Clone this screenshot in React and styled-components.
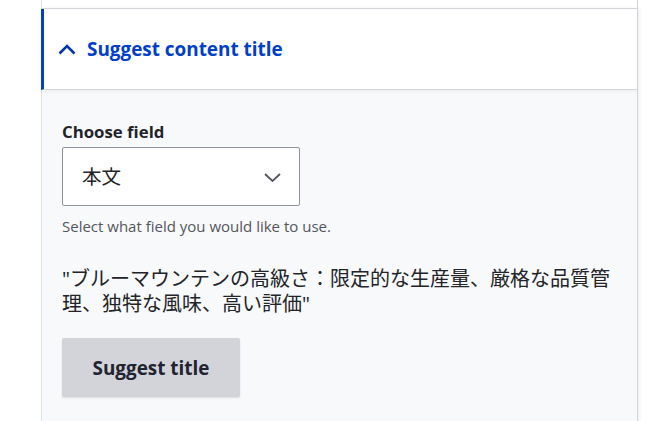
import React, { useState } from "react";
import styled, { createGlobalStyle } from "styled-components";

const GlobalStyle = createGlobalStyle`
  html, body {
    margin: 0;
    padding: 0;
    background: #ffffff;
  }
  body {
    font-family: "Open Sans", "Noto Sans CJK JP", sans-serif;
    font-variant-ligatures: no-common-ligatures;
    color: #232429;
  }
`;

const Page = styled.div`
  padding-left: 41px;
  width: 597px;
`;

const PrevItem = styled.div`
  height: 8px;
  background: #ffffff;
  border-left: 1px solid #dedfe4;
  border-right: 1px solid #d3d4d9;
`;

const Details = styled.div`
  border: 1px solid #d3d4d9;
  border-left-color: #dedfe4;
  border-bottom: none;
  background: #f8f9fb;
  box-shadow: 2px 0 3px rgba(0, 0, 0, 0.05);
  min-height: 420px;
`;

const Summary = styled.button`
  display: flex;
  align-items: center;
  gap: 11px;
  width: calc(100% + 1px);
  height: 81px;
  margin-left: -1px;
  padding: 0 0 0 14px;
  border: none;
  border-left: 3px solid #003ecc;
  border-bottom: 1px solid #d3d4d9;
  background: #ffffff;
  box-shadow: 0 2px 3px rgba(0, 0, 0, 0.04);
  font-family: "Open Sans", sans-serif;
  font-variant-ligatures: no-common-ligatures;
  font-size: 18.9px;
  font-weight: 700;
  color: #003ecc;
  cursor: pointer;
  text-align: left;
  box-sizing: border-box;
`;

const Chevron = styled.svg`
  width: 18px;
  height: 11px;
  flex: none;
  transform: ${(p) => (p.open ? "none" : "rotate(180deg)")};
`;

const Content = styled.div`
  padding: 31px 20px 0 20px;
`;

const Label = styled.label`
  display: block;
  font-size: 16.8px;
  line-height: 22px;
  font-weight: 700;
  color: #232429;
  margin-bottom: 4px;
`;

const SelectBox = styled.div`
  position: relative;
  width: 238px;
  height: 59px;
  box-sizing: border-box;
`;

const Select = styled.select`
  appearance: none;
  width: 100%;
  height: 100%;
  box-sizing: border-box;
  border: 1px solid #8e929c;
  border-radius: 2px;
  background: #ffffff;
  padding: 0 48px 0 19px;
  font-family: "Open Sans", "Noto Sans CJK JP", sans-serif;
  font-size: 19.5px;
  color: #232429;
  outline: none;
`;

const SelectArrow = styled.svg`
  position: absolute;
  right: 19px;
  top: 26px;
  width: 17px;
  height: 9px;
  pointer-events: none;
`;

const Description = styled.div`
  margin-top: 10px;
  font-size: 15px;
  line-height: 20px;
  color: #545560;
`;

const Quote = styled.p`
  margin: 30px 0 0 0;
  font-family: "Open Sans", "Noto Sans CJK JP", sans-serif;
  font-size: 20px;
  line-height: 25px;
  color: #232429;
`;

const Button = styled.button`
  margin-top: 22px;
  width: 178px;
  height: 59px;
  border: none;
  border-radius: 2px;
  background: #d3d4d9;
  box-shadow: 0 1px 2px rgba(0, 0, 0, 0.12);
  font-family: "Open Sans", sans-serif;
  font-variant-ligatures: no-common-ligatures;
  font-size: 18.9px;
  font-weight: 700;
  color: #222330;
  cursor: pointer;
`;

export default function App() {
  const [open, setOpen] = useState(true);

  return (
    <>
      <GlobalStyle />
      <Page>
        <PrevItem />
        <Details>
          <Summary onClick={() => setOpen(!open)}>
            <Chevron open={open} viewBox="0 0 18 11">
              <polyline
                points="1.5,9.5 9,2 16.5,9.5"
                fill="none"
                stroke="#0036b1"
                strokeWidth="2.6"
              />
            </Chevron>
            Suggest content title
          </Summary>
          {open && (
            <Content>
              <Label htmlFor="field">Choose field</Label>
              <SelectBox>
                <Select id="field" defaultValue="body">
                  <option value="body">本文</option>
                </Select>
                <SelectArrow viewBox="0 0 17 9">
                  <polyline
                    points="1,1 8.5,8 16,1"
                    fill="none"
                    stroke="#545560"
                    strokeWidth="1.8"
                  />
                </SelectArrow>
              </SelectBox>
              <Description>Select what field you would like to use.</Description>
              <Quote>
                "ブルーマウンテンの高級さ：限定的な生産量、厳格な品質管理、独特な風味、高い評価"
              </Quote>
              <Button>Suggest title</Button>
            </Content>
          )}
        </Details>
      </Page>
    </>
  );
}
